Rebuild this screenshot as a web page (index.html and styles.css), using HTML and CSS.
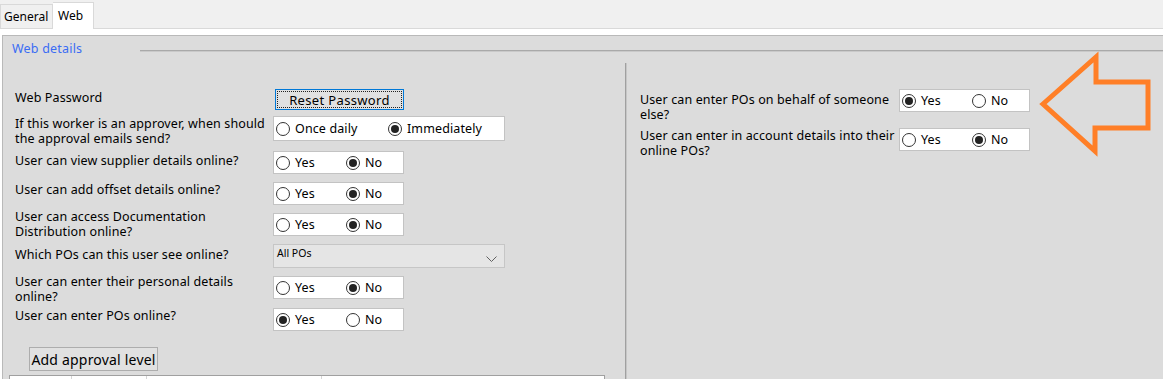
FILE: index.html
```html
<!DOCTYPE html>
<html>
<head>
<meta charset="utf-8">
<link rel="stylesheet" href="styles.css">
</head>
<body>
<div class="tabstrip">
  <div class="tab">General</div>
  <div class="tab active">Web</div>
</div>
<div class="page">
  <div class="panel">
    <div class="group-head"><span class="group-title">Web details</span><span class="group-line"></span></div>
    <div class="columns">
      <div class="col-left">
        <div class="row h27">
          <div class="label p1">Web Password</div>
          <button class="btn btn-reset"><span class="focus-rect">Reset Password</span></button>
        </div>
        <div class="row h35">
          <div class="label">If this worker is an approver, when should<br>the approval emails send?</div>
          <div class="opts wide"><label class="opt w112"><span class="radio"></span>Once daily</label><label class="opt"><span class="radio on"></span>Immediately</label></div>
        </div>
        <div class="row h31">
          <div class="label p2">User can view supplier details online?</div>
          <div class="opts"><label class="opt w70"><span class="radio"></span>Yes</label><label class="opt"><span class="radio on"></span>No</label></div>
        </div>
        <div class="row h31">
          <div class="label">User can add offset details online?</div>
          <div class="opts"><label class="opt w70"><span class="radio"></span>Yes</label><label class="opt"><span class="radio on"></span>No</label></div>
        </div>
        <div class="row h31">
          <div class="label m4">User can access Documentation<br>Distribution online?</div>
          <div class="opts"><label class="opt w70"><span class="radio"></span>Yes</label><label class="opt"><span class="radio on"></span>No</label></div>
        </div>
        <div class="row h32">
          <div class="label p3">Which POs can this user see online?</div>
          <div class="select"><span class="select-text">All POs</span><svg class="chev" width="11" height="7" viewBox="0 0 11 7"><polyline points="0.5,0.5 5.5,5.5 10.5,0.5" fill="none" stroke="#606060" stroke-width="1"/></svg></div>
        </div>
        <div class="row h32">
          <div class="label m2">User can enter their personal details<br>online?</div>
          <div class="opts"><label class="opt w70"><span class="radio"></span>Yes</label><label class="opt"><span class="radio on"></span>No</label></div>
        </div>
        <div class="row h39">
          <div class="label">User can enter POs online?</div>
          <div class="opts"><label class="opt w70"><span class="radio on"></span>Yes</label><label class="opt"><span class="radio"></span>No</label></div>
        </div>
        <div class="row h28">
          <button class="btn btn-add">Add approval level</button>
        </div>
        <div class="grid">
          <div class="cell c1"></div><div class="cell c2"></div><div class="cell c3"></div><div class="cell c4"></div>
        </div>
      </div>
      <div class="divider"></div>
      <div class="col-right">
        <div class="row h39">
          <div class="label rlabel p3">User can enter POs on behalf of someone<br>else?</div>
          <div class="opts"><label class="opt w70"><span class="radio on"></span>Yes</label><label class="opt"><span class="radio"></span>No</label></div>
        </div>
        <div class="row h31">
          <div class="label rlabel">User can enter in account details into their<br>online POs?</div>
          <div class="opts"><label class="opt w70"><span class="radio"></span>Yes</label><label class="opt"><span class="radio on"></span>No</label></div>
        </div>
      </div>
    </div>
  </div>
</div>
<svg class="arrow" width="1163" height="379" viewBox="0 0 1163 379">
  <path d="M1043,104 L1096,57 L1096,82 L1148,82 L1148,128 L1095,128 L1095,151 Z" fill="none" stroke="#ff7f27" stroke-width="5" stroke-linejoin="miter"/>
</svg>
</body>
</html>
```
FILE: styles.css
```css
html, body {
  margin: 0;
  padding: 0;
}
body {
  width: 1163px;
  height: 379px;
  overflow: hidden;
  position: relative;
  background: #f0f0f0;
  font-family: "Noto Sans", "Open Sans", sans-serif;
  font-size: 12.5px;
  letter-spacing: 0.12px;
  color: #000;
}
.tabstrip {
  display: flex;
  align-items: flex-end;
  height: 29px;
  box-sizing: border-box;
  border-bottom: 1px solid #d9d9d9;
}
.tab {
  height: 24px;
  box-sizing: border-box;
  width: 53px;
  padding-left: 3px;
  line-height: 23px;
  border: 1px solid #d9d9d9;
  border-bottom: none;
  background: #f0f0f0;
  font-size: 12px;
  letter-spacing: 0;
}
.tab.active {
  height: 27px;
  width: 41px;
  margin-bottom: -1px;
  padding-left: 5px;
  line-height: 26px;
  background: #fff;
  border-left: none;
}
.page {
  background: #fff;
  padding-top: 6px;
  padding-left: 2px;
  height: 350px;
  box-sizing: border-box;
}
.panel {
  background: #dcdcdc;
  border-top: 1px solid #b9b9b9;
  border-left: 1px solid #b9b9b9;
  height: 344px;
  box-sizing: border-box;
  overflow: hidden;
}
.group-head {
  display: flex;
  align-items: flex-start;
  height: 15px;
  margin-top: 5px;
  padding-left: 9px;
}
.group-title {
  width: 128px;
  flex: none;
  color: #3a6cf4;
  line-height: 15px;
  font-size: 12.5px;
  letter-spacing: 0.2px;
}
.group-line {
  flex: 1;
  height: 1px;
  margin-top: 9px;
  background: #a9a9a9;
  border-bottom: 1px solid #c9c9c9;
}
.columns {
  display: flex;
  margin-top: 7px;
  height: 316px;
}
.col-left {
  width: 610px;
  flex: none;
  padding-left: 12px;
  padding-top: 26px;
}
.divider {
  width: 1px;
  background: #a0a0a0;
  border-right: 1px solid #c6c6c6;
  flex: none;
}
.col-right {
  padding-left: 13px;
  padding-top: 26px;
}
.row {
  display: flex;
  align-items: flex-start;
}
.h27 { height: 27px; }
.h28 { height: 28px; }
.h31 { height: 31px; }
.h32 { height: 32px; }
.h35 { height: 35px; }
.h39 { height: 39px; }
.label {
  width: 258px;
  flex: none;
  line-height: 15px;
  white-space: nowrap;
}
.rlabel { width: 259px; }
.p1 { padding-top: 1px; }
.p2 { padding-top: 2px; }
.p3 { padding-top: 3px; }
.m1 { margin-top: -1px; }
.m2 { margin-top: -2px; }
.m4 { margin-top: -4px; }
.opts {
  width: 131px;
  height: 23px;
  box-sizing: border-box;
  background: #fff;
  border: 1px solid #c3c3c3;
  display: flex;
  align-items: center;
  padding-left: 2px;
}
.opts.wide {
  width: 232px;
  height: 25px;
}
.opt {
  display: flex;
  align-items: center;
  flex: none;
}
.w70 { width: 70px; }
.w112 { width: 112px; }
.radio {
  width: 14px;
  height: 14px;
  box-sizing: border-box;
  border: 1px solid #333;
  border-radius: 50%;
  background: #fff;
  margin-right: 5px;
  display: flex;
  align-items: center;
  justify-content: center;
}
.radio.on::after {
  content: "";
  width: 8px;
  height: 8px;
  border-radius: 50%;
  background: #222;
}
.btn {
  font-family: inherit;
  color: #000;
  background: #e1e1e1;
  border: 1px solid #adadad;
  padding: 0;
  box-sizing: border-box;
  width: 129px;
}
.btn-reset {
  margin-left: 2px;
  height: 21px;
  font-size: 13px;
  letter-spacing: 0.35px;
  border-color: #0078d7;
  padding: 1px;
}
.focus-rect {
  display: block;
  height: 100%;
  box-sizing: border-box;
  border: 1px dotted #222;
  line-height: 16px;
}
.btn-add {
  margin-left: 14px;
  height: 24px;
  font-size: 14px;
  letter-spacing: 0.2px;
}
.select {
  width: 232px;
  height: 24px;
  box-sizing: border-box;
  background: #e5e5e5;
  border: 1px solid #c6c6c6;
  display: flex;
  align-items: flex-start;
  justify-content: space-between;
  padding: 2px 7px 0 3px;
}
.select-text {
  font-size: 10.5px;
  line-height: 12px;
  letter-spacing: 0;
}
.chev {
  margin-top: 9px;
}
.grid {
  margin-left: -6px;
  width: 596px;
  height: 5px;
  box-sizing: border-box;
  background: #fff;
  border: 1px solid #a0a0a0;
  border-bottom: none;
  display: flex;
}
.cell {
  border-right: 1px solid #d5d5d5;
  flex: none;
}
.c1 { width: 61px; }
.c2 { width: 74px; }
.c3 { width: 174px; }
.c4 { flex: 1; border-right: none; }
.arrow {
  position: absolute;
  left: 0;
  top: 0;
  pointer-events: none;
}
```
